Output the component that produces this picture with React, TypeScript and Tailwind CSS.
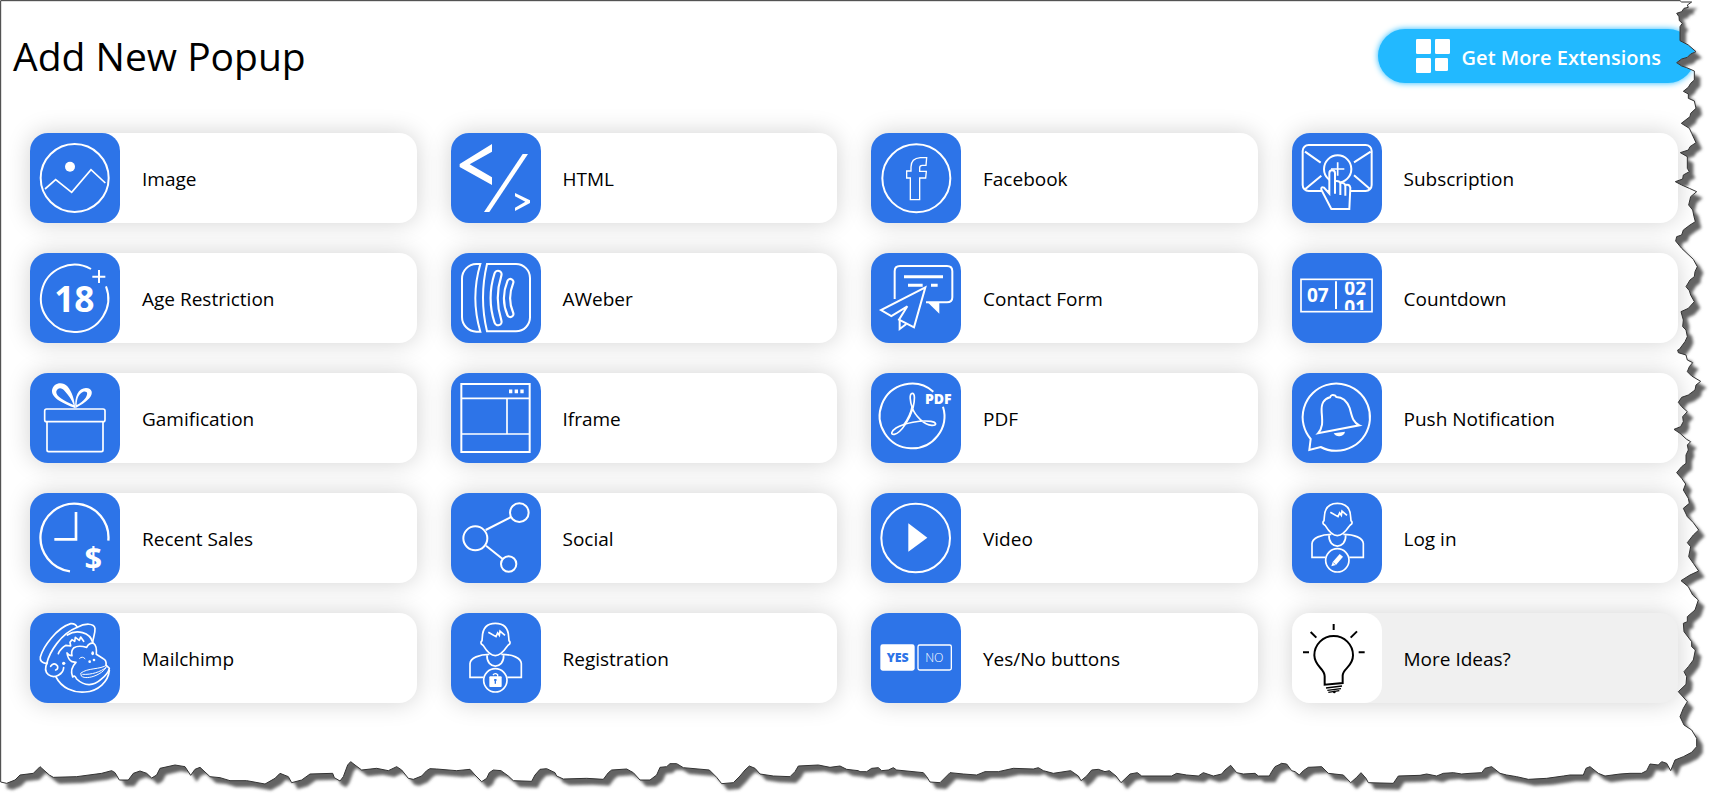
import type { ReactNode } from "react";

type Point = [number, number];

/** Icons are drawn on a 270 x 270 grid. */
function Icon({ children }: { children: ReactNode }) {
  return (
    <svg
      viewBox="0 0 270 270"
      aria-hidden="true"
      className="size-full"
      fill="none"
      stroke="currentColor"
      strokeWidth={6}
      fontFamily="'Open Sans', 'Noto Sans', sans-serif"
    >
      {children}
    </svg>
  );
}

function ImageIcon() {
  return (
    <Icon>
      <circle cx="134" cy="135" r="102" />
      <circle cx="120" cy="101" r="15" fill="currentColor" stroke="none" />
      <path d="M45 168L77 140L125 178L183 110L226 150" strokeWidth={5} />
    </Icon>
  );
}

function HtmlIcon() {
  return (
    <Icon>
      <g fill="currentColor" stroke="none">
        <path d="M26 93L123 33V56L56 94L123 133V156L26 102Z" />
        <path d="M215 63H231L115 237H99Z" />
        <path d="M192 180L237 202V210L192 234V224L223 206L192 190Z" />
      </g>
    </Icon>
  );
}

function FacebookIcon() {
  return (
    <Icon>
      <circle cx="136" cy="136" r="102" />
      <path
        d="M167 74H148Q120 76 120 102V114H107V135H118V200H146V135H164L166 115H146V104Q146 97 154 97H165Z"
        strokeWidth={4}
      />
    </Icon>
  );
}

function SubscriptionIcon() {
  return (
    <Icon>
      <rect x="32" y="36" width="207" height="138" rx="18" />
      <path d="M39 56L86 89M236 56L186 88M40 168L88 128M234 168L186 127" />
      <circle cx="137" cy="108" r="41" />
      <path d="M137 88V128M117 108H157" strokeWidth={5} />
      <path
        d="M112 182V121Q112 112 120 112Q129 112 129 121V145Q140 142 146 150Q156 148 160 156Q172 152 175 164L172 228H118L88 170Q86 160 96 164Z"
        className="fill-[#2d74e8]"
      />
      <path d="M129 143V182M145 150V186M160 156V188" />
    </Icon>
  );
}

function AgeIcon() {
  return (
    <Icon>
      <path d="M183 48A101 101 0 1 0 228 100" />
      <path d="M187 71H226M207 51V90" />
      <text x="133" y="176" fontSize="106" fontWeight="700" textAnchor="middle" fill="currentColor" stroke="none">
        18
      </text>
    </Icon>
  );
}

function AWeberIcon() {
  return (
    <Icon>
      <path d="M88 33H76A44 44 0 0 0 33 77V192A44 44 0 0 0 76 236H88Q58 135 88 33Z" />
      <path d="M108 33H195A42 42 0 0 1 237 75V193A42 42 0 0 1 195 235H108Q84 135 108 33Z" />
      <g strokeLinecap="round">
        <path d="M141 64Q118 136 141 206" strokeWidth={28} />
        <path d="M141 64Q118 136 141 206" strokeWidth={15} className="stroke-[#2d74e8]" />
        <path d="M178 87Q158 136 178 183" strokeWidth={25} />
        <path d="M178 87Q158 136 178 183" strokeWidth={12} className="stroke-[#2d74e8]" />
      </g>
    </Icon>
  );
}

function ContactIcon() {
  return (
    <Icon>
      <path d="M71 138V55Q71 39 87 39H228Q244 39 244 55V133Q244 148 228 148H165" />
      <path d="M172 150H205V182Z" fill="currentColor" stroke="none" />
      <path d="M99 71H216M111 97H155M180 97H200" strokeWidth={9} />
      <path d="M163 103L30 171L61 189L109 160L84 200L129 223Z" />
      <path d="M86 200V228L106 213" />
    </Icon>
  );
}

function CountdownIcon() {
  return (
    <Icon>
      <clipPath id="countdown-window">
        <rect x="140" y="86" width="96" height="85" />
      </clipPath>
      <rect x="27" y="79" width="213" height="97" strokeWidth={5} />
      <path d="M132 85V168" />
      <g fontSize="57" fontWeight="700" fill="currentColor" stroke="none">
        <text x="45" y="147">07</text>
        <text clipPath="url(#countdown-window)">
          <tspan x="157" y="126">02</tspan>
          <tspan x="157" y="183">01</tspan>
        </text>
      </g>
    </Icon>
  );
}

function GiftIcon() {
  return (
    <Icon>
      <g strokeWidth={5}>
        <rect x="44" y="108" width="181" height="38" rx="6" />
        <path d="M51 146V231Q51 236 56 236H214Q219 236 219 231V146" />
      </g>
      <g fill="currentColor" fillRule="evenodd" stroke="none">
        <path d="M136 106C100 92 64 76 66 52C70 28 98 24 112 40C127 58 133 80 136 106ZM131 96C105 85 75 70 79 55C84 42 96 44 104 54C117 68 125 80 131 96Z" />
        <path d="M136 106C133 70 145 45 168 45C188 46 190 62 178 76C168 88 150 97 136 106ZM140 96C140 74 148 61 160 56C174 54 174 64 167 74C160 84 150 91 140 96Z" />
      </g>
    </Icon>
  );
}

function IframeIcon() {
  return (
    <Icon>
      <rect x="31" y="33" width="205" height="204" />
      <path d="M31 76H236M31 183H236M168 76V183" strokeWidth={5} />
      <path d="M174 55H184M191 55H201M208 55H218" strokeWidth={11} />
    </Icon>
  );
}

function PdfIcon() {
  return (
    <Icon>
      <path d="M187 56A97 97 0 1 0 216 101" />
      <path
        d="M124 61C114 61 117 85 124 105C133 130 160 155 182 157C200 158 196 147 180 145C150 141 100 150 75 165C60 175 58 186 70 184C92 180 117 135 126 105C132 80 132 61 124 61Z"
        strokeWidth={5}
      />
      <path d="M124 100Q119 128 98 157" strokeWidth={6} />
      <text x="162" y="93" fontSize="42" fontWeight="800" fill="currentColor" stroke="none">
        PDF
      </text>
    </Icon>
  );
}

function PushIcon() {
  return (
    <Icon>
      <path d="M86 222A101 101 0 1 0 56 198L52 231Z" />
      <path d="M78 181C92 165 92 150 89 118C87 90 95 78 114 73Q118 62 130 68L133 72C155 72 165 85 173 105C180 130 182 148 202 157Z" />
      <path d="M125 181Q131 191 143 190Q157 187 159 176Z" fill="currentColor" stroke="none" />
    </Icon>
  );
}

function SalesIcon() {
  return (
    <Icon>
      <path d="M235 143A102 102 0 1 0 120 235" strokeWidth={7} />
      <path d="M138 57V139H73" strokeWidth={8} />
      <text x="190" y="229" fontSize="92" fontWeight="700" textAnchor="middle" fill="currentColor" stroke="none">
        $
      </text>
    </Icon>
  );
}

function SocialIcon() {
  return (
    <Icon>
      <circle cx="73" cy="136" r="36" />
      <circle cx="205" cy="59" r="28" />
      <circle cx="173" cy="213" r="23" />
      <path d="M104 111L180 72M105 158L155 198" />
    </Icon>
  );
}

function VideoIcon() {
  return (
    <Icon>
      <circle cx="134" cy="135" r="103" />
      <path d="M112 91L169 134L112 176Z" fill="currentColor" stroke="none" />
    </Icon>
  );
}

function Person() {
  return (
    <g strokeWidth={5}>
      <path d="M133 31C108 31 95 45 94 72L93 83Q88 86 91 93L97 98C103 108 115 128 133 128C151 128 163 108 170 98L176 93Q179 86 174 83L173 72C172 45 158 31 133 31Z" />
      <path d="M112 58L135 71L140 60L145 67L147 54L162 67" />
      <path d="M97 193H57V152C58 135 85 124 115 124M169 193H211V152C210 135 185 124 151 124" />
      <path d="M108 127C106 170 160 170 158 127" />
      <circle cx="133" cy="202" r="35" />
    </g>
  );
}

function LoginIcon() {
  return (
    <Icon>
      <g transform="translate(3 0)">
        <Person />
        <path d="M115 220L119 207L140 183L150 191L129 216Z" fill="currentColor" stroke="none" />
        <path d="M121 209L128 215" strokeWidth={2} className="stroke-[#2d74e8]" />
      </g>
    </Icon>
  );
}

function MailchimpIcon() {
  return (
    <Icon>
      <g strokeWidth={5} strokeLinejoin="round" strokeLinecap="round">
        <path d="M50 152Q28 148 31 132C40 100 80 45 122 32Q135 30 142 43" />
        <path d="M50 152C58 118 92 62 142 43C165 30 192 30 195 46C196 62 189 75 188 88" />
        <path d="M112 66C140 48 180 58 188 88" />
        <path d="M85 122Q92 106 108 97L122 99L120 88L126 80L134 85L136 73L148 82L152 72L161 85" />
        <path d="M111 120Q114 140 126 146L138 148Q118 168 128 192Q134 184 140 198C165 222 192 218 212 200Q235 182 238 166L228 156Q230 142 220 137L199 124Q201 98 191 91Q178 88 170 103Q145 96 132 104Q122 114 126 128Q116 128 111 120Z" />
        <path d="M52 148Q40 172 55 185C75 200 100 182 101 164M62 160Q72 146 82 158Q86 168 77 171" />
        <path d="M78 192C95 225 130 240 165 237C205 235 235 205 238 172" />
        <path d="M153 180C172 164 212 170 230 156C228 180 172 204 155 190ZM158 184C185 186 212 176 228 164" strokeWidth={3} />
        <path d="M149 136Q157 128 165 137" strokeWidth={3} />
      </g>
      <g fill="currentColor" stroke="none">
        <circle cx="179" cy="146" r="4" />
        <circle cx="192" cy="141" r="4" />
        <ellipse cx="188" cy="121" rx="4" ry="6" />
        <circle cx="101" cy="151" r="5" />
      </g>
    </Icon>
  );
}

function RegistrationIcon() {
  return (
    <Icon>
      <Person />
      <path d="M126 186Q132 178 140 185V191" strokeWidth={4} />
      <rect x="115" y="190" width="37" height="32" rx="3" fill="currentColor" stroke="none" />
      <path d="M133 198V212M129 201H137" strokeWidth={4} className="stroke-[#2d74e8]" />
    </Icon>
  );
}

function YesNoIcon() {
  return (
    <Icon>
      <rect x="28" y="94" width="103" height="79" rx="7" fill="currentColor" stroke="none" />
      <rect x="141" y="96" width="100" height="75" rx="5" strokeWidth={4} />
      <g fontSize="37" textAnchor="middle" stroke="none">
        <text x="80" y="146" fontWeight="800" className="fill-[#2d74e8]">YES</text>
        <text x="190" y="146" fontWeight="300" fill="currentColor">NO</text>
      </g>
    </Icon>
  );
}

function IdeaIcon() {
  return (
    <Icon>
      <path d="M98 215V190C98 165 68 162 67 127A58 58 0 0 1 183 127C183 162 153 165 152 188V210Z" />
      <path d="M125 33V51M56 57L73 74M195 55L176 74M33 118H51M200 118H218" />
      <path d="M102 225L150 219M106 232L147 227M109 238L142 233" strokeWidth={4} />
      <circle cx="127" cy="237" r="4" fill="currentColor" stroke="none" />
    </Icon>
  );
}

const POPUP_TYPES: { label: string; Glyph: () => ReactNode; muted?: boolean }[] = [
  { label: "Image", Glyph: ImageIcon },
  { label: "HTML", Glyph: HtmlIcon },
  { label: "Facebook", Glyph: FacebookIcon },
  { label: "Subscription", Glyph: SubscriptionIcon },
  { label: "Age Restriction", Glyph: AgeIcon },
  { label: "AWeber", Glyph: AWeberIcon },
  { label: "Contact Form", Glyph: ContactIcon },
  { label: "Countdown", Glyph: CountdownIcon },
  { label: "Gamification", Glyph: GiftIcon },
  { label: "Iframe", Glyph: IframeIcon },
  { label: "PDF", Glyph: PdfIcon },
  { label: "Push Notification", Glyph: PushIcon },
  { label: "Recent Sales", Glyph: SalesIcon },
  { label: "Social", Glyph: SocialIcon },
  { label: "Video", Glyph: VideoIcon },
  { label: "Log in", Glyph: LoginIcon },
  { label: "Mailchimp", Glyph: MailchimpIcon },
  { label: "Registration", Glyph: RegistrationIcon },
  { label: "Yes/No buttons", Glyph: YesNoIcon },
  { label: "More Ideas?", Glyph: IdeaIcon, muted: true },
];

// Paper outline, clockwise from the top right corner, in stretches that each
// have their own origin on the 5163 x 2421 canvas.
const TORN_EDGE: { origin: Point; points: Point[] }[] = [
  {
    origin: [3840, 0],
    points: [
      [1200, 2], [1205, 6], [1235, 6], [1222, 15], [1225, 22], [1212, 25], [1205, 35], [1190, 40], [1197, 50],
      [1198, 62], [1207, 70], [1200, 80], [1200, 122], [1225, 135], [1248, 155], [1232, 162], [1222, 172],
      [1205, 177], [1190, 188], [1205, 198], [1220, 203], [1243, 213], [1243, 240], [1232, 250], [1225, 262],
      [1210, 274], [1225, 282], [1225, 295], [1243, 303], [1248, 325], [1232, 340], [1230, 350], [1204, 370],
      [1228, 385], [1235, 400], [1248, 428], [1230, 440], [1225, 450], [1201, 458], [1222, 470], [1222, 505],
      [1228, 515], [1210, 525], [1208, 537], [1186, 545], [1205, 555], [1228, 565], [1250, 575], [1232, 590],
      [1226, 615], [1238, 630], [1242, 650], [1246, 665], [1230, 675], [1210, 690], [1205, 705], [1190, 710],
      [1187, 723], [1205, 745], [1240, 778], [1252, 800], [1245, 815], [1243, 830], [1230, 840], [1218, 860],
      [1228, 872], [1232, 885], [1243, 905], [1225, 925], [1203, 935], [1210, 960], [1208, 980], [1218, 990],
      [1222, 1010], [1215, 1025], [1198, 1048],
    ],
  },
  {
    origin: [3840, 1050],
    points: [
      [1193, 0], [1195, 8], [1218, 15], [1222, 30], [1238, 38], [1228, 50], [1222, 65], [1235, 78], [1262, 94],
      [1248, 105], [1245, 120], [1225, 135], [1205, 142], [1195, 157], [1205, 170], [1222, 185], [1208, 200],
      [1210, 215], [1202, 230], [1182, 238], [1200, 250], [1220, 268], [1232, 275], [1222, 285], [1225, 300],
      [1218, 315], [1218, 340], [1205, 350], [1190, 368], [1205, 385], [1217, 402], [1210, 420], [1225, 445],
      [1228, 460], [1210, 475], [1222, 500], [1240, 518], [1256, 540], [1240, 555], [1222, 578], [1232, 590],
      [1226, 620], [1240, 640], [1256, 663], [1230, 675], [1203, 692], [1225, 710], [1238, 735], [1255, 750],
      [1245, 780], [1222, 800], [1222, 815], [1210, 820], [1212, 845], [1235, 875], [1235, 890], [1246, 900],
      [1240, 930], [1225, 950], [1212, 965], [1220, 980], [1218, 1003], [1195, 1025], [1222, 1055],
      [1210, 1075], [1200, 1100], [1212, 1125], [1235, 1140], [1250, 1165], [1250, 1190], [1235, 1207],
      [1210, 1220], [1185, 1230], [1172, 1262], [1160, 1240], [1145, 1235], [1135, 1245], [1110, 1242],
      [1100, 1262], [1085, 1270], [1050, 1270], [1020, 1272], [975, 1278], [955, 1270], [930, 1250],
      [918, 1255], [910, 1275], [870, 1275], [850, 1278], [800, 1285], [745, 1288], [710, 1280], [680, 1275],
      [660, 1270], [635, 1250], [615, 1255], [605, 1268], [570, 1270], [545, 1272], [520, 1268], [490, 1270],
      [470, 1278], [440, 1272], [420, 1276], [355, 1278], [340, 1300], [265, 1298], [258, 1285], [243, 1268],
      [230, 1282], [212, 1298], [190, 1275], [145, 1270], [125, 1250], [85, 1252], [70, 1262], [58, 1275],
      [45, 1265], [35, 1262], [20, 1242], [4, 1240],
    ],
  },
  {
    origin: [2580, 1410],
    points: [
      [1260, 883], [1245, 890], [1235, 905], [1228, 918], [1195, 918], [1185, 910], [1150, 912], [1130, 908],
      [1112, 886], [1095, 900], [1085, 912], [1060, 918], [1030, 908], [1015, 918], [980, 915], [950, 910],
      [935, 918], [845, 918], [832, 908], [810, 912], [783, 938], [768, 918], [748, 902], [735, 905],
      [715, 898], [695, 900], [680, 918], [663, 932], [655, 918], [632, 902], [580, 910], [550, 902],
      [535, 893], [520, 897], [460, 895], [415, 905], [375, 905], [350, 915], [310, 912], [270, 908],
      [240, 938], [210, 936], [200, 920], [190, 908], [110, 900], [100, 893], [85, 900], [65, 902], [55, 893],
      [35, 895], [20, 905], [0, 905],
    ],
  },
  {
    origin: [1290, 1410],
    points: [
      [1285, 902], [1250, 898], [1230, 888], [1200, 892], [1165, 885], [1105, 888], [1095, 905], [1080, 920],
      [1030, 918], [990, 912], [975, 895], [958, 888], [945, 900], [930, 918], [910, 938], [875, 941],
      [860, 922], [838, 900], [760, 893], [740, 881], [720, 881], [710, 890], [690, 892], [680, 915],
      [660, 930], [630, 930], [610, 908], [590, 897], [545, 900], [535, 908], [520, 928], [470, 925],
      [400, 927], [380, 918], [375, 908], [350, 896], [330, 898], [315, 915], [305, 934], [250, 932],
      [235, 918], [213, 902], [190, 900], [178, 908], [170, 925], [155, 935], [135, 915], [120, 898],
      [80, 902], [20, 897], [0, 896],
    ],
  },
  {
    origin: [0, 1050],
    points: [
      [1280, 1262], [1265, 1278], [1240, 1288], [1225, 1285], [1205, 1260], [1190, 1250], [1165, 1262],
      [1130, 1255], [1085, 1260], [1065, 1245], [1052, 1235], [1043, 1245], [1030, 1280], [1020, 1293],
      [1003, 1283], [998, 1270], [930, 1272], [905, 1290], [875, 1298], [865, 1280], [840, 1270],
      [825, 1285], [795, 1302], [740, 1292], [690, 1292], [660, 1283], [630, 1280], [600, 1252], [585, 1258],
      [572, 1276], [555, 1250], [525, 1245], [480, 1255], [470, 1275], [455, 1284], [440, 1270], [420, 1263],
      [400, 1270], [385, 1290], [358, 1290], [345, 1268], [335, 1262], [305, 1270], [230, 1280], [160, 1282],
      [148, 1275], [120, 1250], [100, 1270], [60, 1275], [45, 1290], [20, 1300], [2, 1296],
    ],
  },
];

const PAPER = `M2 2L${TORN_EDGE.flatMap(({ origin, points }) =>
  points.map(([x, y]) => `${origin[0] + x} ${origin[1] + y}`),
).join("L")}Z`;
const OUTSIDE = `M-60 -60H5223V2481H-60Z${PAPER}`;

/** Torn paper frame that lies over the page. */
function TornFrame() {
  return (
    <svg
      viewBox="0 0 5163 2421"
      preserveAspectRatio="none"
      aria-hidden="true"
      className="pointer-events-none absolute inset-0 size-full"
    >
      <clipPath id="outside-paper">
        <path d={OUTSIDE} clipRule="evenodd" />
      </clipPath>
      <filter id="paper-shadow" x="-5%" y="-5%" width="110%" height="110%">
        <feGaussianBlur stdDeviation="4" />
      </filter>
      <path d={OUTSIDE} fillRule="evenodd" className="fill-white" />
      <g clipPath="url(#outside-paper)">
        <path d={PAPER} transform="translate(18 19)" filter="url(#paper-shadow)" className="fill-[#646464]" />
      </g>
      <path d={PAPER} strokeWidth={3} className="fill-none stroke-[#333333]" />
    </svg>
  );
}

export default function App() {
  return (
    <div className="relative min-h-screen overflow-hidden bg-white pb-[104px] font-['Open_Sans','Noto_Sans',sans-serif] text-black">
      <header className="flex items-center justify-between pt-[29px] pr-[26px] pl-[13px]">
        <h1 className="text-[39px] leading-[54px] font-medium">Add New Popup</h1>
        <button
          type="button"
          className="flex h-[54px] items-center gap-3 rounded-full bg-[#22b9ff] pr-[34px] pl-[38px] text-xl font-semibold text-white shadow-[0_0_6px_#22b9ff]"
        >
          <svg viewBox="0 0 102 102" aria-hidden="true" className="size-[34px] fill-white">
            <rect width="45" height="45" rx="4" />
            <rect x="57" width="45" height="45" rx="4" />
            <rect y="57" width="45" height="45" rx="4" />
            <rect x="57" y="57" width="39" height="39" rx="4" />
          </svg>
          <span className="pt-[3px]">Get More Extensions</span>
        </button>
      </header>

      <main className="pt-[50px] pr-[43px] pl-[30px]">
        <ul className="grid grid-cols-4 gap-x-[34px] gap-y-[30px]">
          {POPUP_TYPES.map(({ label, Glyph, muted }) => (
            <li key={label}>
              <a
                href="#"
                className={`flex h-[90px] items-center gap-[22px] rounded-[18px] text-[19px] font-medium shadow-[0_0_24px_rgba(0,0,0,0.18)] ${
                  muted ? "bg-[#f0f0f0]" : "bg-white"
                }`}
              >
                <span
                  className={`size-[90px] shrink-0 rounded-[18px] ${
                    muted ? "bg-white text-black" : "bg-[#2d74e8] text-white"
                  }`}
                >
                  <Glyph />
                </span>
                <span className="pt-[2px]">{label}</span>
              </a>
            </li>
          ))}
        </ul>
      </main>

      <TornFrame />
    </div>
  );
}
